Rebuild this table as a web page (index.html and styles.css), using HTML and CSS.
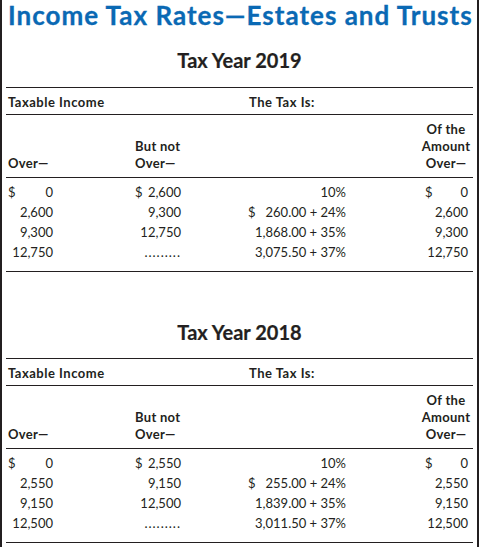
FILE: index.html
```html
<!DOCTYPE html>
<html>
<head>
<meta charset="utf-8">
<link rel="stylesheet" href="styles.css">
</head>
<body>
<div class="page">
  <h1 class="title">Income Tax Rates—Estates and Trusts</h1>

  <section class="sec">
    <h2 class="year">Tax Year 2019</h2>
    <div class="tbl">
      <div class="grid grouprow">
        <span class="g1">Taxable Income</span>
        <span></span>
        <span class="g3">The Tax Is:</span>
        <span></span>
      </div>
      <div class="grid headrow">
        <div class="hc c1">Over—</div>
        <div class="hc c2">But not<br>Over—</div>
        <div class="hc c3"></div>
        <div class="hc c4">Of the<br>Amount<br>Over—</div>
      </div>
      <div class="data">
        <div class="grid row">
          <div class="c1"><span class="num n1"><span>$</span><span>0</span></span></div>
          <div class="c2"><span class="num n2"><span>$</span><span>2,600</span></span></div>
          <div class="c3"><span class="num n3"><span></span><span>10%</span></span></div>
          <div class="c4"><span class="num n4"><span>$</span><span>0</span></span></div>
        </div>
        <div class="grid row">
          <div class="c1"><span class="num n1"><span></span><span>2,600</span></span></div>
          <div class="c2"><span class="num n2"><span></span><span>9,300</span></span></div>
          <div class="c3"><span class="num n3"><span>$</span><span>260.00 + 24%</span></span></div>
          <div class="c4"><span class="num n4"><span></span><span>2,600</span></span></div>
        </div>
        <div class="grid row">
          <div class="c1"><span class="num n1"><span></span><span>9,300</span></span></div>
          <div class="c2"><span class="num n2"><span></span><span>12,750</span></span></div>
          <div class="c3"><span class="num n3"><span></span><span>1,868.00 + 35%</span></span></div>
          <div class="c4"><span class="num n4"><span></span><span>9,300</span></span></div>
        </div>
        <div class="grid row">
          <div class="c1"><span class="num n1"><span></span><span>12,750</span></span></div>
          <div class="c2"><span class="num n2"><span></span><span class="dots">.........</span></span></div>
          <div class="c3"><span class="num n3"><span></span><span>3,075.50 + 37%</span></span></div>
          <div class="c4"><span class="num n4"><span></span><span>12,750</span></span></div>
        </div>
      </div>
    </div>
  </section>

  <section class="sec sec2">
    <h2 class="year">Tax Year 2018</h2>
    <div class="tbl">
      <div class="grid grouprow">
        <span class="g1">Taxable Income</span>
        <span></span>
        <span class="g3">The Tax Is:</span>
        <span></span>
      </div>
      <div class="grid headrow">
        <div class="hc c1">Over—</div>
        <div class="hc c2">But not<br>Over—</div>
        <div class="hc c3"></div>
        <div class="hc c4">Of the<br>Amount<br>Over—</div>
      </div>
      <div class="data">
        <div class="grid row">
          <div class="c1"><span class="num n1"><span>$</span><span>0</span></span></div>
          <div class="c2"><span class="num n2"><span>$</span><span>2,550</span></span></div>
          <div class="c3"><span class="num n3"><span></span><span>10%</span></span></div>
          <div class="c4"><span class="num n4"><span>$</span><span>0</span></span></div>
        </div>
        <div class="grid row">
          <div class="c1"><span class="num n1"><span></span><span>2,550</span></span></div>
          <div class="c2"><span class="num n2"><span></span><span>9,150</span></span></div>
          <div class="c3"><span class="num n3"><span>$</span><span>255.00 + 24%</span></span></div>
          <div class="c4"><span class="num n4"><span></span><span>2,550</span></span></div>
        </div>
        <div class="grid row">
          <div class="c1"><span class="num n1"><span></span><span>9,150</span></span></div>
          <div class="c2"><span class="num n2"><span></span><span>12,500</span></span></div>
          <div class="c3"><span class="num n3"><span></span><span>1,839.00 + 35%</span></span></div>
          <div class="c4"><span class="num n4"><span></span><span>9,150</span></span></div>
        </div>
        <div class="grid row">
          <div class="c1"><span class="num n1"><span></span><span>12,500</span></span></div>
          <div class="c2"><span class="num n2"><span></span><span class="dots">.........</span></span></div>
          <div class="c3"><span class="num n3"><span></span><span>3,011.50 + 37%</span></span></div>
          <div class="c4"><span class="num n4"><span></span><span>12,500</span></span></div>
        </div>
      </div>
    </div>
  </section>
</div>
</body>
</html>
```

FILE: styles.css
```css
html, body {
  margin: 0;
  padding: 0;
  background: #ffffff;
}

.page {
  width: 479px;
  height: 547px;
  box-sizing: border-box;
  border-left: 2px solid #231f20;
  border-right: 2px solid #231f20;
  padding: 0 4px;
  font-family: Lato, "Open Sans", sans-serif;
  color: #231f20;
  overflow: hidden;
}

.title {
  margin: 0;
  padding-left: 2px;
  font-size: 26px;
  line-height: 31px;
  font-weight: 700;
  letter-spacing: 1px;
  color: #0a69b4;
  -webkit-text-stroke: 0.3px #0a69b4;
  white-space: nowrap;
}

.year {
  margin: 17px 0 15px;
  font-size: 20px;
  line-height: 24px;
  font-weight: 700;
  text-align: center;
  -webkit-text-stroke: 0.2px #231f20;
}

.sec2 .year {
  margin: 48px 0 14px;
}

.grid {
  display: grid;
  grid-template-columns: 127px 113px 170px 57px;
}

.grouprow {
  border-top: 1px solid #231f20;
  border-bottom: 1px solid #231f20;
  padding-top: 2px;
  line-height: 24px;
  font-size: 13px;
  font-weight: 700;
  letter-spacing: 0.5px;
}

.g1 {
  padding-left: 2px;
}

.g3 {
  padding-left: 3px;
}

.headrow {
  padding: 6px 0 5px;
  border-bottom: 1px solid #231f20;
  font-size: 13px;
  line-height: 17px;
  font-weight: 700;
  letter-spacing: 0.3px;
  height: 51px;
}

.hc {
  align-self: end;
}

.headrow .c1,
.headrow .c2 {
  padding-left: 2px;
}

.headrow .c4 {
  text-align: center;
  padding-left: 3px;
}

.data {
  padding: 4px 0 9px;
  border-bottom: 1px solid #231f20;
  font-size: 13px;
  line-height: 20px;
}

.row .c1,
.row .c2,
.row .c3 {
  padding-left: 2px;
}

.row .c4 {
  padding-left: 9px;
}

.num {
  display: flex;
  justify-content: space-between;
  white-space: nowrap;
}

.n1 { width: 45px; }
.n2 { width: 46px; }
.n3 { width: 98px; }
.n4 { width: 43px; }

.dots {
  letter-spacing: 1px;
}
```
